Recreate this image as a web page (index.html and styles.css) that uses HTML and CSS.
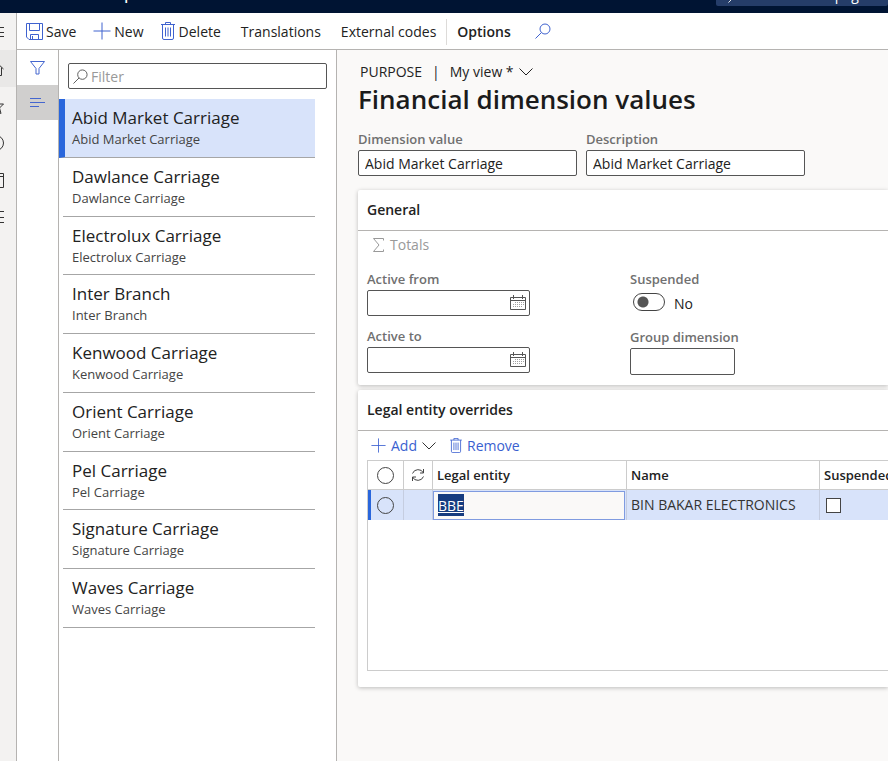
FILE: index.html
```html
<!DOCTYPE html>
<html lang="en">
<head>
<meta charset="utf-8">
<title>Financial dimension values</title>
<link rel="stylesheet" href="styles.css">
</head>
<body>
<svg class="defs" aria-hidden="true">
  <symbol id="plus" viewBox="0 0 18 18"><path d="M9 0.5v17M0.5 9h17"/></symbol>
  <symbol id="trash" viewBox="0 0 14 18"><path d="M0 2.5h14M4.5 2.500V.5h5v2M1.500 2.500v13.500q0 1.500 1.500 1.500h8q1.500 0 1.500-1.500V2.500M4.500 5.500v9M7 5.500v9M9.500 5.500v9"/></symbol>
  <symbol id="search" viewBox="0 0 16 16"><circle cx="10" cy="6" r="5"/><path d="M6.400 9.600L.5 15.500"/></symbol>
  <symbol id="chevron" viewBox="0 0 14 8"><path d="M.5.5L7 7 13.500.5"/></symbol>
  <symbol id="calendar" viewBox="0 0 16 15"><path d="M.5 2.500h15v12H.5zM.5 5.500h15M3.500 0v4M12.500 0v4"/><path stroke-opacity=".55" stroke-dasharray="1 1" d="M3.500 9v4M5.500 7v6M7.500 7v6M9.500 7v6M11.500 7v6M13.500 7v3"/></symbol>
</svg>
<header class="topbar">
  <span class="brand">Finance and Operations</span>
  <span class="topsearch"><svg width="14" height="14"><use href="#search"/></svg>Search for a page</span>
</header>
<div class="app">
  <nav class="rail" aria-label="Main">
    <a href="#" aria-label="Menu"><svg width="16" height="16"><path d="M0 3.500h16M0 8.500h16M0 12.500h16"/></svg></a>
    <a href="#" class="current" aria-label="Home"><svg width="16" height="16"><path d="M0 8L8 1l7.500 7M13.500 6.500v8h-4v-5h-3v5h-4v-8"/></svg></a>
    <a href="#" aria-label="Favorites"><svg width="16" height="16"><path d="M8 1l2 5h5.500l-4 4 1.500 5.500-5-3-5 3 1.500-5.500-4-4H6z"/></svg></a>
    <a href="#" aria-label="Recent"><svg width="16" height="16"><circle cx="8" cy="8" r="7.500"/></svg></a>
    <a href="#" aria-label="Workspaces"><svg width="16" height="16"><path d="M.5 1.500h15v14H.5zM.5 4.500h15"/></svg></a>
    <a href="#" aria-label="Modules"><svg width="16" height="16"><path d="M0 2.500h16M0 8.500h16M0 13.500h16"/></svg></a>
  </nav>
  <div class="page">
    <div class="toolbar" role="toolbar">
      <button class="cmd save"><svg width="17" height="17"><path d="M.5.5h16v16H3l-2.500-2.500zM3.500.5v7h10v-7M4.500 16.500v-5h8v5M6.500 13v3.500"/></svg>Save</button>
      <button class="cmd new"><svg width="18" height="18"><use href="#plus"/></svg>New</button>
      <button class="cmd delete"><svg width="14" height="18"><use href="#trash"/></svg>Delete</button>
      <button class="cmd">Translations</button>
      <button class="cmd">External codes</button>
      <button class="cmd options">Options</button>
      <button class="cmd" aria-label="Search"><svg width="16" height="16"><use href="#search"/></svg></button>
    </div>
    <div class="work">
      <div class="viewrail">
        <button aria-label="Filters"><svg width="15" height="14"><path d="M.5.500h14L9 7.500v5.500H6V7.500z"/></svg></button>
        <button class="on" aria-label="List"><svg width="15" height="10"><path d="M0 .5h11M0 4.500h15M0 8.500h9"/></svg></button>
      </div>
      <aside class="list">
        <label class="filter"><svg width="15" height="15"><use href="#search"/></svg><input type="text" placeholder="Filter" aria-label="Filter"></label>
        <ul class="items">
          <li class="selected"><b>Abid Market Carriage</b><span>Abid Market Carriage</span></li>
          <li><b>Dawlance Carriage</b><span>Dawlance Carriage</span></li>
          <li><b>Electrolux Carriage</b><span>Electrolux Carriage</span></li>
          <li><b>Inter Branch</b><span>Inter Branch</span></li>
          <li><b>Kenwood Carriage</b><span>Kenwood Carriage</span></li>
          <li><b>Orient Carriage</b><span>Orient Carriage</span></li>
          <li><b>Pel Carriage</b><span>Pel Carriage</span></li>
          <li><b>Signature Carriage</b><span>Signature Carriage</span></li>
          <li><b>Waves Carriage</b><span>Waves Carriage</span></li>
        </ul>
      </aside>
      <main class="main">
        <div class="crumb"><span>PURPOSE</span><span>|</span><button class="view">My view * <svg width="14" height="8"><use href="#chevron"/></svg></button></div>
        <h1>Financial dimension values</h1>
        <div class="fields">
          <div class="field"><label for="dim">Dimension value</label><input id="dim" type="text" value="Abid Market Carriage"></div>
          <div class="field"><label for="desc">Description</label><input id="desc" type="text" value="Abid Market Carriage"></div>
        </div>
        <section class="card general">
          <h2>General</h2>
          <button class="totals" disabled><svg width="11" height="14"><path d="M10.500 2.500v-2H.5L6 7 .5 13.500h10v-2"/></svg>Totals</button>
          <div class="columns">
            <div class="stack">
              <div class="field"><label for="from">Active from</label><div class="date"><input id="from" type="text"><svg width="16" height="15"><use href="#calendar"/></svg></div></div>
              <div class="field"><label for="to">Active to</label><div class="date"><input id="to" type="text"><svg width="16" height="15"><use href="#calendar"/></svg></div></div>
            </div>
            <div class="stack">
              <div class="field"><label for="susp">Suspended</label><div class="switch"><input id="susp" type="checkbox" role="switch"><span>No</span></div></div>
              <div class="field"><label for="group">Group dimension</label><input id="group" class="short" type="text"></div>
            </div>
          </div>
        </section>
        <section class="card overrides">
          <h2>Legal entity overrides</h2>
          <div class="actions">
            <button class="add"><svg width="15" height="15"><use href="#plus"/></svg>Add<svg class="dark" width="14" height="8"><use href="#chevron"/></svg></button>
            <button><svg width="12" height="15"><use href="#trash"/></svg>Remove</button>
          </div>
          <div class="grid">
            <table>
              <colgroup><col class="c-pick"><col class="c-sync"><col class="c-entity"><col class="c-name"><col></colgroup>
              <thead>
                <tr>
                  <th><input type="radio" name="all" aria-label="Select all"></th>
                  <th class="sync"><svg width="14" height="14"><path d="M1.500 5.500A6 6 0 0 1 12.500 5M12.500 1v4H9M12.500 8.500A6 6 0 0 1 1.500 9M1.500 13V9H5"/></svg></th>
                  <th>Legal entity</th><th>Name</th><th>Suspended</th>
                </tr>
              </thead>
              <tbody>
                <tr>
                  <td><input type="radio" name="row" aria-label="Select row"></td>
                  <td></td>
                  <td class="edit"><div><input type="text" value="BBE" aria-label="Legal entity"></div></td>
                  <td>BIN BAKAR ELECTRONICS</td>
                  <td><input type="checkbox" aria-label="Suspended"></td>
                </tr>
              </tbody>
            </table>
          </div>
        </section>
      </main>
    </div>
  </div>
</div>
</body>
</html>
```
FILE: styles.css
```css
* { box-sizing: border-box; }
body {
  margin: 0; height: 100vh; overflow: hidden;
  display: flex; flex-direction: column;
  font: 400 14px/20px "Open Sans", "Noto Sans", sans-serif;
  color: #222; background: #faf9f8;
}
svg { fill: none; stroke: currentColor; stroke-width: 1; flex: none; }
.defs { position: absolute; width: 0; height: 0; }
button { font: inherit; color: inherit; background: none; border: 0; padding: 0; display: flex; align-items: center; }
input { font: inherit; color: inherit; margin: 0; }
h1, h2, ul { margin: 0; padding: 0; }

.topbar {
  flex: none; height: 13px; overflow: hidden; background: #001433; color: #fff;
  display: flex; align-items: flex-end; justify-content: space-between; padding-left: 28px;
}
.brand { font-weight: 600; margin-bottom: 8px; }
.topsearch {
  width: 172px; height: 32px; margin-bottom: 7px; padding: 0 12px 3px;
  display: flex; align-items: flex-end; gap: 11px;
  background: #253d69; border-radius: 2px; line-height: 16px;
}

.app { flex: 1; display: flex; min-height: 0; }
.rail { width: 17px; flex: none; overflow: hidden; background: #f3f2f1; border-right: 1px solid #b5b3b1; }
.rail a { height: 37px; padding-right: 12px; display: flex; align-items: center; justify-content: flex-end; color: #333; }
.rail .current { background: #e9e8e7; }

.page { flex: 1; min-width: 0; display: flex; flex-direction: column; }
.toolbar {
  height: 37px; flex: none; display: flex; align-items: center;
  padding: 2px 9px 0; background: #fff; border-bottom: 1px solid #b5b3b1;
}
.cmd { gap: 3px; margin-right: 20px; height: 26px; }
.cmd svg { color: #3f62cf; margin-bottom: 2px; }
.save, .new { margin-right: 17px; }
.cmd.options { font-weight: 600; border-left: 1px solid #dddbd9; padding-left: 10px; margin-left: -10px; margin-right: 24px; }
.delete { gap: 4px; }

.work { flex: 1; display: flex; min-height: 0; }
.viewrail { width: 42px; flex: none; background: #fff; border-right: 1px solid #b5b3b1; }
.viewrail button { width: 100%; height: 35px; justify-content: center; color: #4466cf; }
.viewrail .on { background: #d0cfce; }

.list { width: 278px; flex: none; background: #fff; border-right: 1px solid #b5b3b1; padding-top: 13px; }
.filter {
  display: flex; align-items: center; gap: 3px; height: 26px; margin: 0 9px 10px;
  padding: 0 4px; border: 1px solid #555; border-radius: 2px; color: #555;
}
.filter input { flex: 1; min-width: 0; border: 0; padding: 2px 0 0; outline: 0; }
.filter input::placeholder { color: #999; }
.items { list-style: none; width: 256px; display: grid; grid-template-rows: repeat(9, 1fr); min-height: 529px; }
.items li { border-bottom: 1px solid #a6a6a6; margin-left: 4px; padding: 7px 0 0 9px; }
.items .selected { background: #d8e3fa; margin-left: 0; padding-left: 7px; border-left: 6px solid #2966dc; }
.items b { display: block; font-size: 17px; font-weight: 500; line-height: 24px; color: #222; }
.items span { display: block; font-size: 13px; line-height: 18px; color: #444; }

.main { flex: 1; min-width: 0; overflow: hidden; padding: 12px 0 0 21px; }
.crumb { display: flex; gap: 10px; padding-left: 2px; }
.view { gap: 5px; height: 20px; }
h1 { font-size: 26px; line-height: 34px; font-weight: 600; color: #1b1b1b; margin-bottom: 14px; }
.fields { display: flex; gap: 9px; margin-bottom: 14px; }
.field label { display: block; font-size: 13px; font-weight: 600; line-height: 18px; color: #707070; margin-bottom: 2px; }
.field input[type="text"] {
  display: block; width: 219px; height: 26px; padding: 0 6px; background: #fff;
  border: 1px solid #555; border-radius: 2px;
}
.card { background: #fff; border-radius: 2px 0 0 2px; box-shadow: 0 1px 4px rgba(0, 0, 0, .25); margin-bottom: 5px; }
h2 { font-size: 14px; font-weight: 600; line-height: 40px; padding-left: 9px; border-bottom: 1px solid #b5b3b1; }
.general { padding-bottom: 10px; }
.totals { gap: 6px; height: 28px; padding-left: 15px; color: #999; }
.columns { display: flex; gap: 100px; padding: 11px 9px 0; }
.stack { display: flex; flex-direction: column; gap: 11px; }
.date { position: relative; }
.field .date input { width: 163px; padding-right: 24px; }
.date svg { position: absolute; right: 4px; top: 5px; color: #555; }
.field input.short { width: 105px; height: 27px; }
.switch { display: flex; align-items: center; gap: 9px; height: 27px; padding-left: 3px; }
.switch input {
  appearance: none; width: 32px; height: 18px; border: 1px solid #444; border-radius: 9px; margin-bottom: 3px;
  background: radial-gradient(circle at 9px 8px, #555 5px, transparent 6px);
}
.overrides { padding-bottom: 16px; }
.actions { display: flex; gap: 14px; height: 29px; padding-left: 13px; color: #3a5fd0; }
.actions button { gap: 5px; }
.actions .dark { color: #333; }
.grid { margin-left: 9px; min-height: 211px; border: 1px solid #ccc; border-right: 0; }
table { width: 100%; table-layout: fixed; border-collapse: separate; border-spacing: 0; }
.c-pick { width: 36px; } .c-sync { width: 29px; } .c-entity { width: 194px; } .c-name { width: 193px; }
th, td { padding: 0 4px; text-align: left; white-space: nowrap; border-right: 1px solid #ccc; vertical-align: middle; }
th { height: 29px; font-size: 13px; font-weight: 600; border-bottom: 1px solid #ccc; }
th:last-child, td:last-child { border-right: 0; }
td { height: 30px; background: #d8e3fa; color: #333; border-right-color: #c5cde0; }
td:first-child { border-left: 3px solid #2966dc; padding-left: 6px; }
th:first-child { padding-left: 9px; }
.sync { padding-left: 7px; color: #444; }
th input, td input { display: block; }
th svg { display: block; }
input[type="radio"] { appearance: none; width: 17px; height: 17px; border: 1px solid #444; border-radius: 50%; }
td input[type="checkbox"] { appearance: none; width: 15px; height: 15px; margin-left: 2px; border: 1px solid #444; background: #fff; }
.edit { padding: 0 1px 0 0; }
.edit div { height: 29px; display: flex; align-items: center; padding-left: 4px; background: #faf9f8; border: 1px solid #7f9be0; }
.edit input { width: 26px; height: 22px; padding: 0; border: 0; background: #163c80; color: #fff; text-decoration: underline; }
```
